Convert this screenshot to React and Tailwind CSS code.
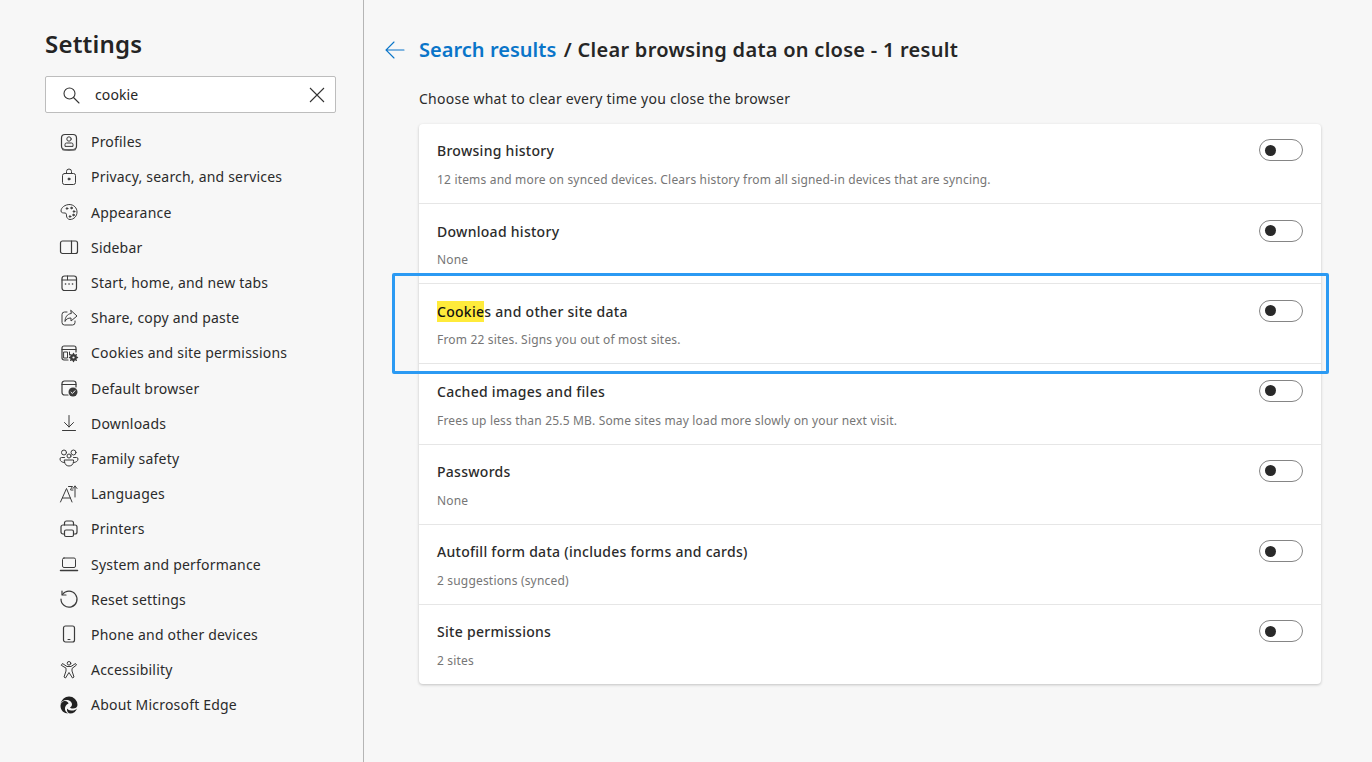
const sans = "font-['Noto_Sans','Open_Sans',sans-serif]";

function Icon({ children }) {
  return (
    <svg width="20" height="20" viewBox="0 0 20 20" fill="none" stroke="#3b3b3b" strokeWidth="1" strokeLinecap="round" strokeLinejoin="round">
      {children}
    </svg>
  );
}

const navItems = [
  ["Profiles", <><rect x="2.500" y="2.500" width="15" height="15" rx="3.500" strokeWidth="1.200" /><path d="M4 17.500c1 .6 11 .6 12 0" strokeWidth="2" stroke="#666" /><circle cx="10" cy="7" r="2.200" /><path d="M6 14v-1.500A1.500 1.500 0 0 1 7.500 11h5a1.500 1.500 0 0 1 1.500 1.500V14z" /></>],
  ["Privacy, search, and services", <><rect x="3.500" y="6.500" width="13" height="11" rx="2" /><path d="M7.500 6.500V4.500a2.500 2.500 0 0 1 5 0v2" /><circle cx="10" cy="12" r="1" fill="#3b3b3b" /></>],
  ["Appearance", <><path d="M10.500 2.500c-4.500 0-8.500 3-8.500 6.500 0 2 2.500 2 4 2 1.500 0 1.500 1.500 1.500 3s1.500 3.500 3.500 3.500c4 0 7-3.500 7-7.500s-3-7.500-7.500-7.500z" /><circle cx="8" cy="6.500" r=".8" fill="#3b3b3b" /><circle cx="12.500" cy="6" r=".8" fill="#3b3b3b" /><circle cx="15" cy="9.500" r=".8" fill="#3b3b3b" /><circle cx="14.500" cy="13" r=".8" fill="#3b3b3b" /><circle cx="11" cy="14.500" r=".8" fill="#3b3b3b" /></>],
  ["Sidebar", <><rect x="1.500" y="4" width="17" height="12.500" rx="2" strokeWidth="1.200" /><path d="M12.500 4v12.500" strokeWidth="1.200" /></>],
  ["Start, home, and new tabs", <><rect x="3" y="3" width="14.500" height="14.500" rx="2.500" strokeWidth="1.200" /><path d="M3 7h5.500V3M8.500 7h9" /><path d="M6.500 11h.1M10 11h.1M13.500 11h.1" strokeWidth="1.600" /></>],
  ["Share, copy and paste", <><path d="M8 4H5.500A2.500 2.500 0 0 0 3 6.500v8A2.500 2.500 0 0 0 5.500 17h8a2.500 2.500 0 0 0 2.500-2.500V13" /><path d="M12 2.500l6 5.500-6 5v-3c-3 0-5 1-6 3.500 0-4 2-7.500 6-8z" /></>],
  ["Cookies and site permissions", <><path d="M9 17H5a2 2 0 0 1-2-2V5a2 2 0 0 1 2-2h10a2 2 0 0 1 2 2v4" strokeWidth="1.200" /><path d="M3 6.500h14" strokeWidth="1.200" /><rect x="5" y="9" width="3.500" height="6" /><path d="M10.500 9v3" /><path d="M14.500 10.500v8M10.500 14.500h8M11.700 11.700l5.600 5.600M17.300 11.700l-5.600 5.600" strokeWidth="1.400" /><circle cx="14.500" cy="14.500" r="3" fill="#3b3b3b" /><circle cx="14.500" cy="14.500" r="1.100" fill="#f7f7f7" stroke="none" /></>],
  ["Default browser", <><path d="M9 17H5.500A2.500 2.500 0 0 1 3 14.500v-9A2.500 2.500 0 0 1 5.500 3h9A2.500 2.500 0 0 1 17 5.500V9" strokeWidth="1.200" /><path d="M3 6.500h14" strokeWidth="1.200" /><circle cx="14" cy="14" r="4.500" fill="#3b3b3b" stroke="none" /><path d="M12 14.200l1.400 1.300 2.600-2.800" stroke="#f7f7f7" /></>],
  ["Downloads", <><path d="M10 2.500V14M5.500 9.500L10 14l4.500-4.500M3.500 17.500h13" /></>],
  ["Family safety", <><circle cx="5" cy="4.500" r="2.500" /><circle cx="14.500" cy="4.500" r="2.500" /><circle cx="10" cy="8" r="2" /><path d="M5.500 9.500H2.500A1.500 1.500 0 0 0 1 11c0 2 1.800 3.500 4.500 3.500M14.500 9.500h3A1.500 1.500 0 0 1 19 11c0 2-1.800 3.500-4.500 3.500" /><path d="M5.500 12h9v1.500c0 2.800-2 4.500-4.500 4.500s-4.500-1.700-4.500-4.500z" /></>],
  ["Languages", <><path d="M1.500 18L7.500 4.500 13 18M3.500 14h8" /><path d="M9.500 2.500h4l-2 3M14 6h-2M16 2v11M14 4.500l2-2.500 2 2.500" /></>],
  ["Printers", <><path d="M5.500 6V4A2 2 0 0 1 7.500 2h5a2 2 0 0 1 2 2v2" strokeWidth="1.200" /><path d="M5.500 15H4a2 2 0 0 1-2-2V8a2 2 0 0 1 2-2h12a2 2 0 0 1 2 2v5a2 2 0 0 1-2 2h-1.500" strokeWidth="1.200" /><rect x="5.500" y="11" width="9" height="6.500" rx="1.500" strokeWidth="1.200" /></>],
  ["System and performance", <><rect x="3.500" y="4" width="13" height="9.500" rx="1.500" /><path d="M1.500 16.500h17" strokeWidth="1.500" /></>],
  ["Reset settings", <><path d="M3.500 5.500A8 8 0 1 1 2 10" strokeWidth="1.200" /><path d="M3 2v4h4" strokeWidth="1.200" /></>],
  ["Phone and other devices", <><rect x="4.500" y="2" width="11" height="16" rx="2" strokeWidth="1.200" /><path d="M9 15.500h2" /></>],
  ["Accessibility", <><circle cx="10" cy="3.300" r="1.800" /><path d="M2.500 5L3.500 3.500 8 6.500h4L16.500 3.500 17.500 5 13 8.500V11L15 17 13.500 18 10 12.500 6.500 18 5 17 7 11V8.500z" /></>],
  ["About Microsoft Edge", <><path d="M10 1.500a8.500 8.500 0 0 1 8.500 8.500c0 2.500-2.300 3.500-4.500 3.500-1.500 0-3-.5-3-1 0-.5 2-.8 2-3 0-2.500-2.500-4.500-5.500-4.500-2.700 0-5 1.500-6 4C2.500 4.500 6 1.500 10 1.500z" fill="#222" stroke="none" /><path d="M1.500 11c0-3 2.500-5 4.500-5 2 0 3.500 1.500 3.500 2.500C7 9.500 5.500 12 6 14.500c.4 2 2 3.500 3.500 4-4.500 0-8-3-8-7.500z" fill="#222" stroke="none" /><path d="M11 18.500c-2-.5-3.300-2.300-3-4.500.2-1 1.500 2 5 1.500 2 0 3.500-.5 5-2-1 3-3.500 5-7 5z" fill="#222" stroke="none" /></>],
];

const rows = [
  ["Browsing history", "12 items and more on synced devices. Clears history from all signed-in devices that are syncing."],
  ["Download history", "None"],
  ["Cookies and other site data", "From 22 sites. Signs you out of most sites."],
  ["Cached images and files", "Frees up less than 25.5 MB. Some sites may load more slowly on your next visit."],
  ["Passwords", "None"],
  ["Autofill form data (includes forms and cards)", "2 suggestions (synced)"],
  ["Site permissions", "2 sites"],
];

function Toggle() {
  return (
    <div className="-mt-[1px] flex h-[22px] w-[44px] items-center rounded-full border border-[#858585] bg-white pl-[5px]">
      <div className="h-[11px] w-[11px] rounded-full bg-[#292929]" />
    </div>
  );
}

export default function App() {
  return (
    <div className={`relative flex h-[762px] w-[1372px] overflow-hidden bg-[#f7f7f7] text-[#262626] ${sans}`}>
      {/* Sidebar */}
      <aside className="h-full w-[364px] shrink-0 border-r border-[#b5b5b5] pl-[45px] pt-[26px]">
        <h1 className="text-[24px] leading-[36px] font-semibold tracking-[0.2px] text-[#242424]">Settings</h1>
        <div className="mt-[14px] flex h-[37px] w-[291px] items-center rounded-[2px] border border-[#bdbdbd] bg-white pl-[16px] pr-[10px]">
          <svg width="18" height="18" viewBox="0 0 18 18" fill="none" stroke="#333" strokeWidth="1.100" strokeLinecap="round">
            <circle cx="7.500" cy="7.500" r="5.500" />
            <path d="M11.500 11.500L17 17" />
          </svg>
          <span className="ml-[15px] flex-1 text-[14px] tracking-[0.1px]">cookie</span>
          <svg width="16" height="16" viewBox="0 0 16 16" stroke="#333" strokeWidth="1.100">
            <path d="M1 1l14 14M15 1L1 15" />
          </svg>
        </div>
        <nav className="mt-[11.2px] pl-[14px]">
          {navItems.map(([label, icon]) => (
            <div key={label} className="flex h-[35.2px] items-center gap-[12px]">
              <Icon>{icon}</Icon>
              <span className="text-[14px] tracking-[0.2px] text-[#2b2b2b]">{label}</span>
            </div>
          ))}
        </nav>
      </aside>

      {/* Main */}
      <main className="flex-1 pl-[21px] pt-[32px]">
        <div className="flex h-[36px] items-center">
          <svg width="20" height="18" viewBox="0 0 20 18" fill="none" stroke="#0a75c9" strokeWidth="1.100" strokeLinecap="round">
            <path d="M1 9h18M9 1L1 9l8 8" />
          </svg>
          <h2 className="ml-[14px] text-[20px] leading-[36px] font-semibold tracking-[0.27px]">
            <span className="mr-[2px] tracking-[0.03px] text-[#0a75c9]">Search results</span> / Clear browsing data on close - 1 result
          </h2>
        </div>
        <p className="ml-[34px] mt-[21px] text-[14px] leading-[20px] tracking-[0.25px] text-[#2b2b2b]">
          Choose what to clear every time you close the browser
        </p>
        <div className="ml-[34px] mt-[15px] w-[902px] overflow-hidden rounded-[4px] bg-white shadow-[0_1px_3px_rgba(0,0,0,0.22)]">
          {rows.map(([title, desc], i) => (
            <div key={title} className="flex h-[80.15px] items-start justify-between border-b border-[#e6e6e6] pl-[18px] pr-[18px] pt-[16.4px] last:h-[79px] last:border-b-0">
              <div>
                <div className="text-[14px] leading-[22px] font-medium tracking-[0.28px] text-[#2b2b2b]">
                  {i === 2 ? <><mark className="bg-[#ffeb3b] py-[1px] text-[#111]">Cookie</mark>s and other site data</> : title}
                </div>
                <div className="mt-[8.8px] text-[12px] leading-[18px] tracking-[0.18px] text-[#767676]">{desc}</div>
              </div>
              <Toggle />
            </div>
          ))}
        </div>
      </main>

      {/* Callout drawn over the Cookies row */}
      <div className="absolute left-[392px] top-[273px] h-[101px] w-[937px] rounded-[2px] border-[3px] border-[#2b9af3]" />
    </div>
  );
}
